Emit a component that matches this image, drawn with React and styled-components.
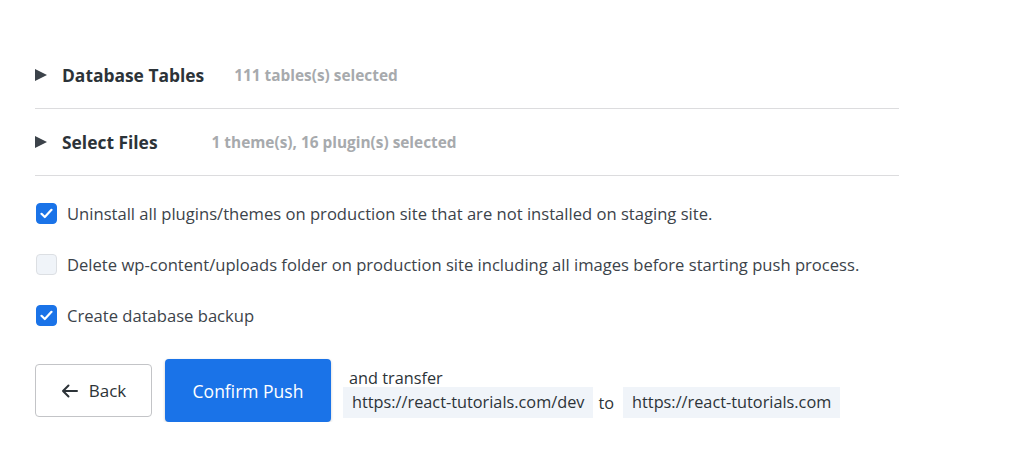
import styled, { createGlobalStyle } from "styled-components"
import { useState } from "react"

const GlobalStyle = createGlobalStyle`
  body {
    margin: 0;
    background: #ffffff;
    font-family: "Open Sans", "Liberation Sans", sans-serif;
    color: #2c3338;
  }
`

const Page = styled.div`
  padding: 42px 35px 0px 35px;
  width: 864px;
`

const Section = styled.div`
  display: flex;
  align-items: center;
  height: 66px;
  border-bottom: 1px solid #dcdcde;
`

const Caret = styled.span`
  width: 0;
  height: 0;
  border-top: 6px solid transparent;
  border-bottom: 6px solid transparent;
  border-left: 12px solid #3c434a;
  margin-right: 15px;
`

const SectionTitle = styled.div`
  font-size: 17.4px;
  font-weight: 700;
  color: #2c3338;
`

const SectionInfo = styled.div`
  font-size: 15.4px;
  font-weight: 700;
  color: #a7aaad;
  margin-left: ${(p) => p.$offset}px;
`

const Options = styled.div`
  padding-top: 12px;
`

const OptionRow = styled.label`
  display: flex;
  align-items: center;
  height: 51px;
  font-size: 16.6px;
  color: #3c434a;
  cursor: pointer;
`

const Box = styled.span`
  width: 21px;
  height: 21px;
  box-sizing: border-box;
  border-radius: 4px;
  margin-left: 1px;
  margin-right: 10px;
  display: flex;
  align-items: center;
  justify-content: center;
  flex-shrink: 0;
  background: ${(p) => (p.$checked ? "#1a73e8" : "#f0f4f9")};
  border: 1px solid ${(p) => (p.$checked ? "#1a73e8" : "#dcdfe3")};
`

const Actions = styled.div`
  display: flex;
  align-items: center;
  margin-top: 18px;
`

const BackButton = styled.button`
  width: 117px;
  height: 53px;
  display: flex;
  align-items: center;
  justify-content: center;
  gap: 11px;
  background: #ffffff;
  border: 1px solid #c3c4c7;
  border-radius: 4px;
  font-family: inherit;
  font-size: 17px;
  color: #2c3338;
  cursor: pointer;
`

const ConfirmButton = styled.button`
  width: 166px;
  height: 63px;
  margin-left: 13px;
  background: #1a73e8;
  border: none;
  border-radius: 4px;
  box-shadow: 0 1px 3px rgba(0, 0, 0, 0.2);
  color: #ffffff;
  font-family: inherit;
  font-size: 17.5px;
  cursor: pointer;
`

const Transfer = styled.div`
  margin: 6px 0 0 12px;
  display: flex;
  flex-direction: column;
  font-size: 16.3px;
  color: #2c3338;
`

const TransferLabel = styled.div`
  padding-left: 6px;
  line-height: 18px;
`

const UrlLine = styled.div`
  display: flex;
  align-items: center;
`

const Url = styled.span`
  background: #f0f4f9;
  padding: 0 9px;
  line-height: 31px;
`

const To = styled.span`
  margin: 0 9px 0 5px;
`

function Check() {
  return (
    <svg width="13" height="11" viewBox="0 0 13 11" fill="none">
      <path d="M1.5 5.8 L4.8 9 L11.5 1.8" stroke="#fff" strokeWidth="2.2" strokeLinecap="round" strokeLinejoin="round" />
    </svg>
  )
}

function Option({ checked, onToggle, children }) {
  return (
    <OptionRow onClick={onToggle}>
      <Box $checked={checked}>{checked && <Check />}</Box>
      {children}
    </OptionRow>
  )
}

function App() {
  const [opts, setOpts] = useState([true, false, true])

  function toggle(i) {
    setOpts(opts.map((v, j) => (j === i ? !v : v)))
  }

  return (
    <Page>
      <GlobalStyle />
      <Section>
        <Caret />
        <SectionTitle>Database Tables</SectionTitle>
        <SectionInfo $offset={30}>111 tables(s) selected</SectionInfo>
      </Section>
      <Section>
        <Caret />
        <SectionTitle>Select Files</SectionTitle>
        <SectionInfo $offset={54}>1 theme(s), 16 plugin(s) selected</SectionInfo>
      </Section>

      <Options>
        <Option checked={opts[0]} onToggle={() => toggle(0)}>
          Uninstall all plugins/themes on production site that are not installed on staging site.
        </Option>
        <Option checked={opts[1]} onToggle={() => toggle(1)}>
          Delete wp-content/uploads folder on production site including all images before starting push process.
        </Option>
        <Option checked={opts[2]} onToggle={() => toggle(2)}>
          Create database backup
        </Option>
      </Options>

      <Actions>
        <BackButton>
          <svg width="17" height="14" viewBox="0 0 17 14" fill="none">
            <path d="M16 7H2M7.5 1.5L2 7l5.5 5.5" stroke="#2c3338" strokeWidth="2" strokeLinecap="round" strokeLinejoin="round" />
          </svg>
          Back
        </BackButton>
        <ConfirmButton>Confirm Push</ConfirmButton>
        <Transfer>
          <TransferLabel>and transfer</TransferLabel>
          <UrlLine>
            <Url>https://react-tutorials.com/dev</Url>
            <To>to</To>
            <Url>https://react-tutorials.com</Url>
          </UrlLine>
        </Transfer>
      </Actions>
    </Page>
  )
}

export default App
